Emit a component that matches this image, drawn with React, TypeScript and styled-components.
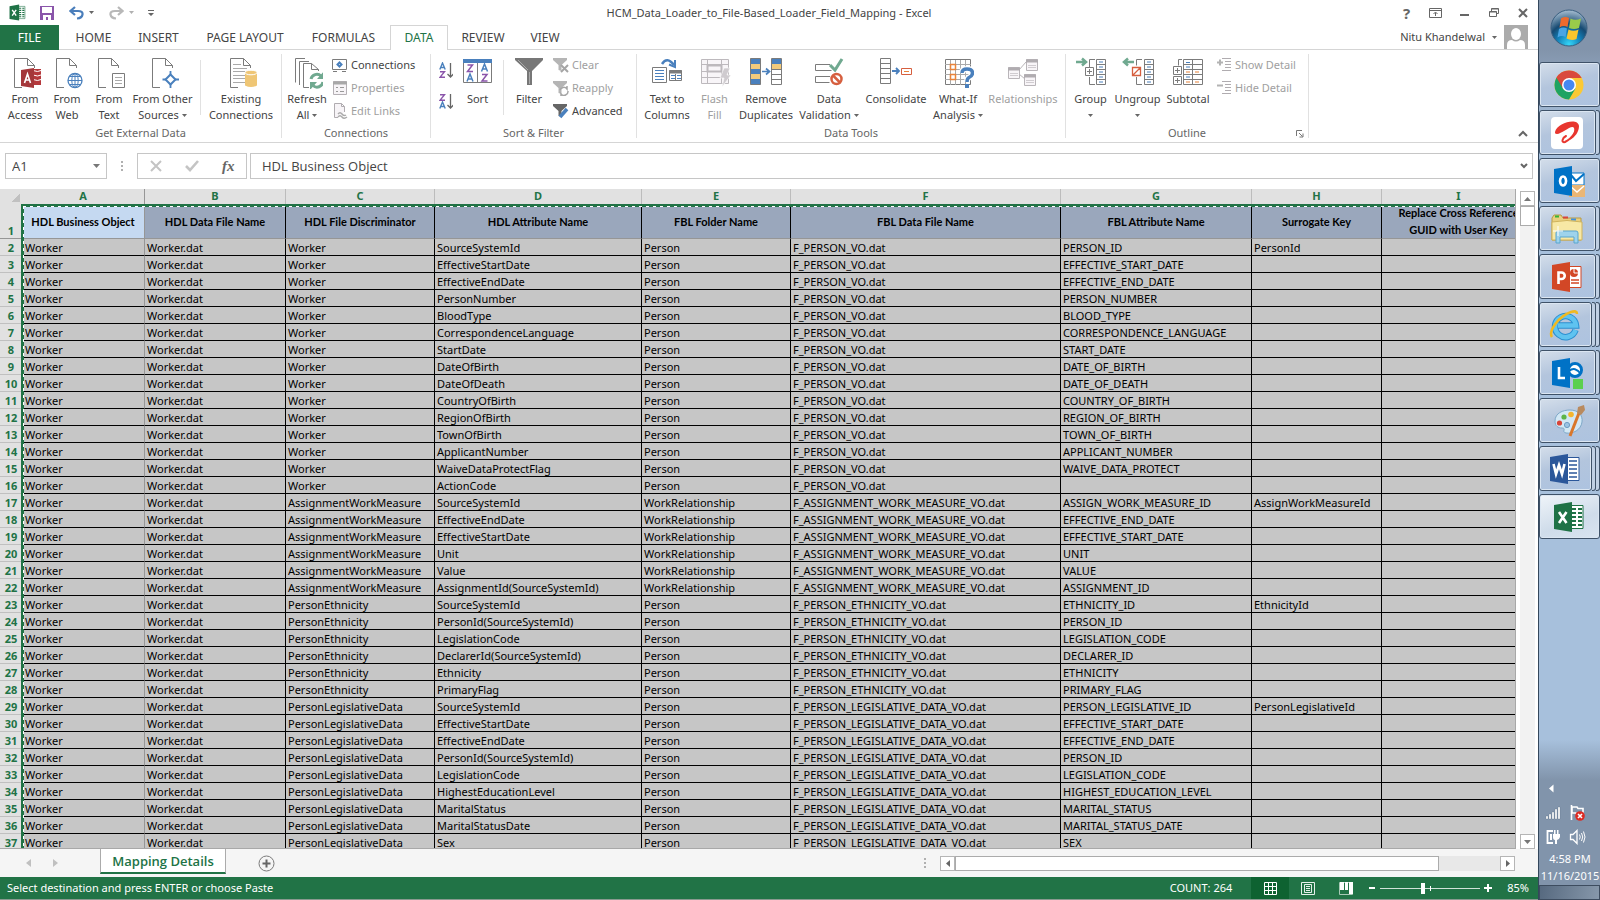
import React from "react";
import styled, { createGlobalStyle, css } from "styled-components";

const GREEN = "#217346";
const GREY = "#7b7b7b";
const BLUE = "#4a80bd";
const PURPLE = "#8a55aa";
const TEAL = "#70a990";
const ORANGE = "#e8833a";
const RED = "#d65f3f";
const UI_FONT = `"Noto Sans", "Open Sans", sans-serif`;

const GlobalStyle = createGlobalStyle`
  *, *::before, *::after { box-sizing: border-box; }
  body { margin: 0; font: 11px/16px ${UI_FONT}; color: #444; background: #fff; overflow: hidden; }
  button, input { font: inherit; color: inherit; border: 0; background: none; padding: 0; margin: 0; border-radius: 0; outline: none; }
  svg { display: block; flex: none; }
`;

/* ---------- shell ---------- */

const Desktop = styled.div`
  display: flex;
  height: 100vh;
`;

const ExcelWindow = styled.main`
  flex: 1;
  min-width: 0;
  display: flex;
  flex-direction: column;
  background: #fff;
`;

/* ---------- title bar ---------- */

const TitleBar = styled.header`
  display: grid;
  grid-template-columns: 1fr auto 1fr;
  align-items: center;
  height: 25px;
`;

const QuickAccess = styled.div`
  display: flex;
  align-items: center;
  height: 22px;
  padding-left: 9px;
`;

const QuickButton = styled.button<{ $w: number }>`
  display: flex;
  align-items: center;
  width: ${(p) => p.$w}px;
  height: 20px;
`;

const Title = styled.h1`
  margin: 0;
  font-size: 11px;
  font-weight: 400;
  line-height: 25px;
`;

const WindowButtons = styled.div`
  display: flex;
  justify-content: flex-end;
  align-items: center;
  height: 22px;
  padding-right: 1px;
`;

const WindowButton = styled.button`
  display: flex;
  align-items: center;
  justify-content: center;
  width: 29px;
  height: 20px;
  font-size: 15px;
  font-weight: 700;
  color: #666;
`;

/* ---------- ribbon tabs ---------- */

const TabBar = styled.nav`
  display: flex;
  height: 25px;
  border-bottom: 1px solid #d5d5d5;
`;

const RibbonTab = styled.button<{ $w: number; $kind?: "file" | "active" }>`
  width: ${(p) => p.$w}px;
  height: 25px;
  font-size: 12px;
  white-space: nowrap;
  ${(p) =>
    p.$kind === "file" &&
    css`
      background: ${GREEN};
      color: #fff;
    `}
  ${(p) =>
    p.$kind === "active" &&
    css`
      margin-left: 4px;
      color: ${GREEN};
      background: #fff;
      border: 1px solid #d5d5d5;
      border-bottom: 0;
    `}
`;

const Account = styled.button`
  display: flex;
  align-items: center;
  gap: 7px;
  height: 24px;
  margin-left: auto;
  padding-right: 10px;
  font-size: 11px;
`;

/* ---------- ribbon ---------- */

const Ribbon = styled.section`
  display: flex;
  position: relative;
  height: 93px;
  padding: 4px 0;
  border-bottom: 1px solid #d5d5d5;
`;

const Group = styled.div<{ $w: number }>`
  position: relative;
  display: flex;
  flex-direction: column;
  width: ${(p) => p.$w}px;
  height: 84px;
  padding-left: 4px;
  border-right: 1px solid #e1e1e1;
`;

const GroupBody = styled.div`
  display: flex;
  height: 72px;
`;

const GroupName = styled.div`
  padding-right: 4px;
  color: #666;
  line-height: 20px;
  text-align: center;
`;

const BigButton = styled.button<{ $w: number; $off?: boolean }>`
  display: flex;
  flex-direction: column;
  align-items: center;
  width: ${(p) => p.$w}px;
  padding-top: 3px;
  white-space: nowrap;
  color: ${(p) => (p.$off ? "#a0a0a0" : "#444")};
`;

const ButtonLabel = styled.span`
  display: flex;
  align-items: center;
  justify-content: center;
  gap: 3px;
  height: 16px;
`;

const LabelStack = styled.span`
  margin-top: 2px;
`;

const Divider = styled.div`
  width: 1px;
  height: 55px;
  margin: 6px 5px 0;
  background: #e1e1e1;
`;

const SmallColumn = styled.div`
  display: flex;
  flex-direction: column;
  margin-left: 4px;
`;

const SmallButton = styled.button<{ $off?: boolean }>`
  display: flex;
  align-items: center;
  gap: 3px;
  height: 23px;
  padding-bottom: 2px;
  white-space: nowrap;
  color: ${(p) => (p.$off ? "#a0a0a0" : "#444")};
`;

const SortColumn = styled.div`
  display: flex;
  flex-direction: column;
  gap: 11px;
  width: 22px;
  padding-top: 8px;
`;

const SortButton = styled.button`
  display: flex;
  justify-content: center;
  height: 20px;
`;

const Launcher = styled.button`
  position: absolute;
  right: 3px;
  bottom: 0;
  width: 9px;
  height: 9px;
`;

const Collapse = styled.button`
  margin: auto 10px 0 auto;
`;

/* ---------- formula bar ---------- */

const FormulaBar = styled.section`
  display: flex;
  align-items: center;
  height: 46px;
  padding: 0 5px;
  font-family: "Open Sans", sans-serif;
  font-size: 13px;
`;

const NameBox = styled.div`
  display: flex;
  align-items: center;
  width: 102px;
  height: 26px;
  padding: 0 6px;
  border: 1px solid #c6c6c6;
`;

const NameInput = styled.input`
  flex: 1;
  min-width: 0;
`;

const Dots = styled.div`
  width: 30px;
  display: flex;
  justify-content: center;
`;

const FormulaTools = styled.div`
  display: flex;
  align-items: center;
  justify-content: space-around;
  width: 110px;
  height: 26px;
  margin-right: 3px;
  border: 1px solid #c6c6c6;
`;

const FxButton = styled.button`
  font: italic 700 15px/20px "Liberation Serif", serif;
  color: #666;
`;

const FormulaBox = styled.div`
  display: flex;
  align-items: center;
  flex: 1;
  height: 26px;
  padding: 0 4px 0 11px;
  border: 1px solid #c6c6c6;
`;

/* ---------- sheet ---------- */

const SheetArea = styled.section`
  display: flex;
  flex: 1;
  min-height: 0;
`;

const GridPane = styled.div`
  position: relative;
  flex: 1;
  min-width: 0;
  overflow: hidden;
  border-right: 1px solid #a8a8a8;
  border-bottom: 1px solid #a8a8a8;
  background: #c6c6c6;
`;

const CopyOutline = styled.div`
  position: absolute;
  top: 15px;
  left: 21px;
  right: 0;
  bottom: 0;
  border-top: 2px solid ${GREEN};
  border-left: 2px solid ${GREEN};
  pointer-events: none;
  &::before {
    content: "";
    position: absolute;
    inset: -1px 0 auto 0;
    height: 2px;
    background: repeating-linear-gradient(90deg, #fff 0 3px, ${GREEN} 3px 7px) top / 100% 1px no-repeat,
      linear-gradient(${GREEN}, ${GREEN});
    background-position: 0 1px, 0 0;
  }
  &::after {
    content: "";
    position: absolute;
    inset: 0 auto 0 0;
    width: 1px;
    background: repeating-linear-gradient(180deg, #fff 0 3px, ${GREEN} 3px 7px);
  }
`;

const Sheet = styled.table`
  table-layout: fixed;
  width: 1536px;
  border-collapse: separate;
  border-spacing: 0;
  color: #000;
`;

const CornerCell = styled.td`
  height: 15px;
  padding: 0;
  background: linear-gradient(135deg, transparent 50%, #c0c0c0 50%) 12px 5px / 8px 8px no-repeat #e1e1e1;
`;

const ColHead = styled.th<{ $freeze?: boolean }>`
  height: 15px;
  padding: 0 0 1px;
  line-height: 14px;
  color: ${GREEN};
  background: #e1e1e1;
  border-right: 1px solid ${(p) => (p.$freeze ? "#969696" : "#bcbcbc")};
`;

const RowHead = styled.th<{ $first?: boolean }>`
  height: ${(p) => (p.$first ? 35 : 17)}px;
  padding: 0;
  line-height: 14px;
  vertical-align: bottom;
  color: ${GREEN};
  background: #e1e1e1;
  border-bottom: 1px solid ${(p) => (p.$first ? "#969696" : "#c0c0c0")};
`;

const FieldHead = styled.td<{ $freeze?: boolean }>`
  height: 35px;
  padding: 0;
  text-align: center;
  white-space: pre;
  font-family: Lato, sans-serif;
  font-weight: 700;
  line-height: 17px;
  background: ${(p) => (p.$freeze ? "#c5d9f1" : "#9aa7bc")};
  border-right: 1px solid ${(p) => (p.$freeze ? "#969696" : "#000")};
  border-bottom: 1px solid #969696;
`;

const Cell = styled.td<{ $freeze?: boolean }>`
  height: 17px;
  padding: 2px 0 0 ${(p) => (p.$freeze ? 3 : 2)}px;
  line-height: 14px;
  white-space: nowrap;
  background: #c6c6c6;
  border-right: 1px solid ${(p) => (p.$freeze ? "#969696" : "#000")};
  border-bottom: 1px solid #000;
`;

const VScroll = styled.div`
  display: flex;
  flex-direction: column;
  width: 15px;
  margin: 2px 3px 0 4px;
  background: #f2f2f2;
`;

const ScrollButton = styled.button`
  display: flex;
  align-items: center;
  justify-content: center;
  flex: none;
  width: 15px;
  height: 15px;
  background: #fff;
  border: 1px solid #b5b5b5;
`;

const VThumb = styled.div`
  height: 20px;
  margin-bottom: auto;
  background: #fff;
  border: 1px solid #ababab;
`;

/* ---------- sheet tabs ---------- */

const SheetTabs = styled.nav`
  display: flex;
  align-items: center;
  height: 28px;
  padding-right: 23px;
  background: #f5f5f5;
`;

const TabArrows = styled.div`
  display: flex;
  gap: 22px;
  width: 100px;
  padding-left: 26px;
`;

const SheetTab = styled.button`
  align-self: flex-start;
  width: 126px;
  height: 25px;
  color: ${GREEN};
  font-family: "Open Sans", sans-serif;
  font-size: 13px;
  font-weight: 600;
  background: #fff;
  border: 1px solid #ababab;
  border-top: 0;
  border-bottom: 2px solid ${GREEN};
`;

const AddSheet = styled.button`
  margin-left: 32px;
`;

const HScroll = styled.div`
  display: flex;
  align-items: center;
  width: 575px;
  margin-left: 14px;
  background: #e8e8e8;
`;

const SplitDots = styled.div`
  margin-left: auto;
`;

const HThumb = styled.div`
  width: 484px;
  height: 15px;
  margin-right: auto;
  background: #fff;
  border: 1px solid #ababab;
`;

/* ---------- status bar ---------- */

const StatusBar = styled.footer`
  display: flex;
  align-items: center;
  height: 23px;
  padding: 0 9px 0 7px;
  color: #fff;
  background: ${GREEN};
  border-bottom: 1px solid #8a9a90;
`;

const Count = styled.span`
  margin-left: auto;
  margin-right: 19px;
`;

const ViewButton = styled.button<{ $on?: boolean }>`
  display: flex;
  align-items: center;
  justify-content: center;
  width: 38px;
  height: 22px;
  background: ${(p) => (p.$on ? "#0e6231" : "transparent")};
`;

const ZoomButton = styled.button`
  display: flex;
  justify-content: center;
  width: 10px;
`;

const ZoomRange = styled.input`
  appearance: none;
  width: 100px;
  height: 14px;
  margin: 0 3px;
  background: linear-gradient(#fff, #fff) 50% 50% / 1px 5px no-repeat,
    linear-gradient(#cfe2d7, #cfe2d7) 0 50% / 100% 1px no-repeat;
  &::-webkit-slider-thumb {
    appearance: none;
    width: 4px;
    height: 11px;
    background: #fff;
  }
`;

const ZoomGroup = styled.div`
  display: flex;
  align-items: center;
  margin: 0 14px 0 2px;
`;

/* ---------- taskbar ---------- */

const Taskbar = styled.aside`
  display: flex;
  flex-direction: column;
  width: 62px;
  border-left: 1px solid #34475c;
  background: linear-gradient(#8294ab 0, #8294ab 50px, #a7c0dc 130px, #a7c0dc calc(100% - 160px), #8194ab calc(100% - 120px));
`;

const StartButton = styled.button`
  display: flex;
  justify-content: center;
  height: 62px;
  padding: 9px 2px 0 0;
`;

const TaskList = styled.div`
  display: flex;
  flex-direction: column;
  gap: 3px;
`;

const TaskRow = styled.div`
  display: flex;
  height: 45px;
`;

const TaskButton = styled.button<{ $active?: boolean }>`
  display: flex;
  align-items: center;
  justify-content: center;
  flex: 1;
  padding-right: 2px;
  border: 1px solid #3f5268;
  border-radius: 3px;
  box-shadow: inset 0 0 0 1px #dbe6f2;
  background: ${(p) =>
    p.$active
      ? "linear-gradient(160deg, #eff4f9, #cfdcea 60%, #d9e4f0)"
      : "linear-gradient(165deg, #d4deea, #b3c5dd 45%, #adc3e0)"};
`;

const TaskEdge = styled.div`
  width: 4px;
  border: 1px solid #3f5268;
  border-left: 0;
  border-radius: 0 3px 3px 0;
  background: #c0d0e3;
`;

const Tray = styled.div`
  margin-top: auto;
  display: flex;
  flex-direction: column;
  color: #fff;
`;

const TrayArrow = styled.button`
  width: 24px;
  padding-left: 9px;
`;

const TrayIcons = styled.div`
  display: grid;
  grid-template-columns: 24px 24px;
  row-gap: 6px;
  padding: 11px 0 4px 6px;
`;

const TrayButton = styled.button`
  height: 18px;
`;

const Clock = styled.time`
  padding-left: 1px;
  line-height: 17px;
  text-align: center;
  white-space: nowrap;
`;

const ShowDesktop = styled.button`
  height: 15px;
  margin-top: 1px;
  border: 1px solid #3d4c5f;
  background: linear-gradient(100deg, #56697f, #8798ab);
`;

/* ---------- icons ---------- */

const Ico = ({ w = 32, h = w, children }: { w?: number; h?: number; children: React.ReactNode }) => (
  <svg width={w} height={h} viewBox={`0 0 ${w} ${h}`} fill="none" stroke={GREY} aria-hidden="true">
    {children}
  </svg>
);

const Caret = ({ color = "#666" }: { color?: string }) => (
  <svg width="5" height="3" viewBox="0 0 5 3" aria-hidden="true">
    <path d="M0 0h5L2.5 3z" fill={color} />
  </svg>
);

const Doc = ({ x = 5 }: { x?: number }) => (
  <>
    <path d={`M${x + 20.5} 11V8.5L${x + 13.5} 1.5H${x + 0.5}V30.5H${x + 8}`} fill="#fff" />
    <path d={`M${x + 13.5} 1.5V8.5H${x + 20.5}`} />
  </>
);

const iconAccess = (
  <Ico>
    <Doc />
    <path d="M25 12h7v16h-7z" fill="#b5383c" stroke="none" />
    <path d="M24 13.5q5 2 8 0M24 18q5 2 8 0M24 22.500q5 2 8 0" stroke="#fff" />
    <path d="M12 13l13-2v20l-13-2z" fill="#a4373a" stroke="none" />
    <path d="M15.500 26L18.500 17L21.500 26M16.500 23h4" stroke="#fff" strokeWidth="1.6" />
  </Ico>
);
const iconWeb = (
  <Ico>
    <Doc />
    <circle cx="24" cy="23.500" r="7" fill="#fff" stroke={BLUE} strokeWidth="1.300" />
    <ellipse cx="24" cy="23.500" rx="3.200" ry="7" stroke={BLUE} />
    <path d="M17 23.500h14M24 16.500v14M18.500 19.500h11M18.500 27.500h11" stroke={BLUE} />
  </Ico>
);
const iconText = (
  <Ico>
    <Doc />
    <path d="M19.500 16.500h12v14h-12z" fill="#fff" />
    <path d="M22 20.500h7M22 23.500h7M22 26.500h7" stroke="#aaa" />
  </Ico>
);
const iconOther = (
  <Ico>
    <Doc />
    <path d="M23.500 14v17M15.500 22.500h17" stroke={BLUE} strokeWidth="1.800" />
    <path d="M23.500 17.500l5 5l-5 5l-5-5z" fill="#fff" stroke={BLUE} strokeWidth="2" />
  </Ico>
);
const iconExisting = (
  <Ico>
    <Doc />
    <path d="M8 7.500h8M8 11.500h14M8 14.500h12M8 18.500h12M8 21.500h12M8 25.500h12" stroke="#aaa" />
    <path d="M20 15.500v13q6 3 12 0v-13z" fill="#efc675" stroke="none" />
    <ellipse cx="26" cy="15.500" rx="6" ry="2.300" fill="#efc675" stroke="#fff" />
  </Ico>
);
const iconRefresh = (
  <Ico>
    <path d="M14 1.500H4.500V25.500M18 4.500H8.500V28" />
    <path d="M27.500 14V12.500L20.500 6.500H12.500V30.500H18" fill="#fff" />
    <path d="M20.500 6.500V12.500H27.500" />
    <path d="M20 22a6 6 0 0 1 10-3M32 25a6 6 0 0 1-10 3.500" stroke={TEAL} strokeWidth="3" />
    <path d="M33 14v8h-7zM19 33v-8h7z" fill={TEAL} stroke="none" />
  </Ico>
);
const iconConnections = (
  <Ico w={16}>
    <path d="M.5 12.500v-10h14v10z" fill="#fff" />
    <path d="M1 14.500h4M10 14.500h4" />
    <path d="M7.500 5.500l2 2l-2 2l-2-2z" stroke={BLUE} strokeWidth="2" />
  </Ico>
);
const iconProperties = (
  <Ico w={16}>
    <path d="M1.500 1.500h13v13h-13z" stroke="#b5b0b5" fill="#f7f4f7" />
    <path d="M1 3h14" stroke="#a8a8a8" strokeWidth="3" />
    <path d="M4 7.500h2M8 7.500h4M4 11.500h2M8 11.500h4" stroke="#999" />
  </Ico>
);
const iconLinks = (
  <Ico w={16}>
    <path d="M6 14.500H2.500V.5h7l3 3V9M9.500 .5v3h3" stroke="#b0acb0" fill="#f7f4f7" />
    <path d="M6 11q2-2.500 4 0t4 1M6 14q2-2.500 4 0t5 0" stroke="#aaa" strokeWidth="1.400" />
  </Ico>
);
const SortGlyph = ({ up }: { up?: boolean }) => (
  <Ico w={14} h={18}>
    <g transform={up ? "translate(0 8)" : undefined} stroke={BLUE} strokeWidth="1.400">
      <path d="M.8 7.500L3.500 1L6.200 7.500M1.800 5.500h3.600" />
    </g>
    <g transform={up ? "translate(0 -8)" : undefined} stroke={PURPLE} strokeWidth="1.400">
      <path d="M1 9.700h4.500L1 15.300h5" />
    </g>
    <path d="M11.500 1v14M8.500 12l3 3l3-3" stroke="#666" strokeWidth="1.300" />
  </Ico>
);
const iconSort = (
  <Ico>
    <path d="M1.500 3v22.500h28V3" fill="#fff" />
    <path d="M1 4h29" stroke={BLUE} strokeWidth="4" />
    <path d="M15.500 6v19" />
    <g strokeWidth="1.500">
      <path d="M5.500 8h5l-5 6.500h5.500M20 17.500h5l-5 6.500h5.500" stroke={PURPLE} />
      <path d="M5 24.500l3-7.500l3 7.500M6 22h4M19.500 14.500l3-7.500l3 7.500M20.500 12h4" stroke={BLUE} />
    </g>
  </Ico>
);
const iconFilter = (
  <Ico>
    <path d="M2 1h28v2L19 14v14h-5V14L2 3z" fill="#777" stroke="none" />
    <path d="M5 3l10 10M16.500 15v12" stroke="#aaa" />
  </Ico>
);
const SmallFunnel = ({ color, extra }: { color: string; extra: React.ReactNode }) => (
  <Ico w={16}>
    <path d="M0 1h14v2L8.500 8v6l-3-1V8L0 3z" fill={color} stroke="none" />
    {extra}
  </Ico>
);
const iconTextToCols = (
  <Ico>
    <path d="M1.500 10.500h14v15h-14z" fill="#fff" />
    <path d="M4 13.500h9M4 16.500h9M4 19.500h9M4 22.500h9" stroke={BLUE} />
    <path d="M18.500 13.500h12v10h-12z" fill="#fff" />
    <path d="M18 15h13" strokeWidth="3" />
    <path d="M20 18.500h4M26 18.500h4M20 21.500h4M26 21.500h4" stroke={BLUE} />
    <path d="M24.500 17v7" />
    <path d="M11 7q5-8 12 1" stroke={BLUE} strokeWidth="2.500" />
    <path d="M18 7.500l6 2.500V3" stroke={BLUE} strokeWidth="2" />
  </Ico>
);
const iconFlash = (
  <Ico>
    <g stroke="#bdb9bd">
      <path d="M2.500 2.500h27v24h-27z" fill="#f8f5f8" />
      <path d="M2 7.500h28M2 14.500h28M2 20.500h28M8.500 3v24M22.500 3v24" />
      <path d="M8.500 8.500h14v6h-14z" strokeWidth="2" />
    </g>
    <path d="M25 11h6l-3 7h4l-9 12l2-9h-4z" fill="#cfcbcf" stroke="#fff" strokeWidth=".6" />
  </Ico>
);
const iconDupes = (
  <Ico>
    <path d="M.5 1.500h10v26H.5z" fill={BLUE} />
    <path d="M1 7h9v5H1zM1 17h9v5H1z" fill="#f3cb7c" stroke="none" />
    <path d="M12 14.500h7M16 11.500l3.500 3l-3.500 3" stroke={BLUE} strokeWidth="1.700" />
    <path d="M21.500 1.500h10v26h-10z" fill="#fff" />
    <path d="M22 2h9v5h-9z" fill={BLUE} stroke="none" />
    <path d="M22 7h9v5h-9z" fill="#f3cb7c" stroke="none" />
    <path d="M22 12.500h9M22 17.500h9M22 22.500h9" />
  </Ico>
);
const iconValidation = (
  <Ico>
    <path d="M17 7.500H2.500v6h16M17 19.500H2.500v6h14" />
    <path d="M17 8l5 5L29 2" stroke={TEAL} strokeWidth="3" />
    <circle cx="23.500" cy="22" r="5" stroke={RED} strokeWidth="2.500" fill="#fff" />
    <path d="M20 18.500l7 7" stroke={RED} strokeWidth="2.500" />
  </Ico>
);
const iconConsolidate = (
  <Ico>
    <path d="M.5 1.500h10v25H.5z" fill="#fff" />
    <path d="M1 6.500h10M1 11.500h10M1 16.500h10M1 21.500h10" />
    <path d="M12 14h7M16 11l3 3l-3 3" stroke={BLUE} strokeWidth="1.800" />
    <path d="M21.500 11.500h10v6h-10z" stroke={RED} />
    <path d="M24 14.500h5" stroke={ORANGE} />
  </Ico>
);
const iconWhatIf = (
  <Ico>
    <path d="M3.500 2.500h25v25h-25z" fill="#fff" />
    <path d="M3 7.500h26M3 12.500h26M3 17.500h26M3 22.500h26M8.500 3v25M13.500 3v25M18.500 3v25M23.500 3v25" stroke="#aaa" />
    <path d="M8.500 7.500h5v5h-5zM8.500 17.500h5v5h-5z" fill="#fff" stroke={ORANGE} strokeWidth="1.500" />
    <path d="M20 16q0-4 5-4q5.500 0 5.500 4q0 3-3.500 4.500q-2 1-2 4.500" stroke="#fff" strokeWidth="6" />
    <path d="M20 16q0-4 5-4q5.500 0 5.500 4q0 3-3.500 4.500q-2 1-2 4.500" stroke={BLUE} strokeWidth="3.500" />
    <path d="M23 27h4v4h-4z" fill={BLUE} stroke="none" />
  </Ico>
);
const iconRelations = (
  <Ico>
    <g stroke="#b9b5b9" fill="#f8f5f8">
      <path d="M12 13l7-8M12 17l6 5" />
      <path d="M19.500 2.500h11v11h-11zM1.500 10.500h11v11h-11zM17.500 17.500h11v11h-11z" />
    </g>
    <path d="M19 4h12M1 12h12M17 19h12" stroke="#b0acb0" strokeWidth="3" />
    <path d="M21 8.500h8M21 10.500h8M3 16.500h8M3 18.500h8M19 23.500h8M19 25.500h8" stroke="#d0ccd0" />
  </Ico>
);
const iconGroup = (
  <Ico>
    <path d="M1 5h9M7 1.500l4 3.500l-4 3.500" stroke={TEAL} strokeWidth="2.500" />
    <path d="M20 2.500h-5.500v8M14.500 20v7.500H20" />
    <path d="M10.500 10.500h8v8h-8zM12 14.500h5M14.500 12v5" />
    <path d="M21.500 2.500h9v25h-9zM22 7.500h9M22 12.500h9M22 17.500h9M22 22.500h9" />
    <path d="M24 5h4M24 10h4M24 15h4M24 20h4M24 25h4" stroke={BLUE} />
  </Ico>
);
const iconUngroup = (
  <Ico>
    <path d="M12 5H3M6 1.500l-4 3.500l4 3.500" stroke={TEAL} strokeWidth="2.500" />
    <path d="M20 2.500h-5.500v6M14.500 20v7.500H20" />
    <path d="M10.500 10.500h8v8h-8zM11 18l7-7" stroke={RED} strokeWidth="1.300" />
    <path d="M22.500 2.500h9v25h-9zM23 7.500h9M23 12.500h9M23 17.500h9M23 22.500h9" />
    <path d="M25 5h4M25 10h4M25 15h4M25 20h4M25 25h4" stroke={BLUE} />
  </Ico>
);
const iconSubtotal = (
  <Ico>
    <path d="M10 2.500H6.500v6M1.500 9.500h8v8h-8zM1.500 19.500h8v8h-8zM3 13.500h5M5.500 11v5M3 23.500h5M5.500 21v5" />
    <path d="M11.500 2.500h19v25h-19zM12 7.500h19M12 12.500h19M12 17.500h19M12 22.500h19M20.500 3v25" />
    <path d="M14 5.500h4M14 10h4M14 20h4" stroke={BLUE} />
    <path d="M14 15h4M14 25h4M23 15h4M23 25h4" stroke={ORANGE} />
  </Ico>
);
const Detail = ({ plus }: { plus?: boolean }) => (
  <Ico w={16}>
    <path d={plus ? "M1 5.500h6M4 2.500v6" : "M1 5.500h6"} stroke="#b3b3b3" strokeWidth="2" />
    <path d="M6 1.500h9M9 4.500h6M9 7.500h6M9 10.500h6M6 13.500h9" stroke="#b0acb0" />
  </Ico>
);

/* two-tone Office application badge: a coloured cover over a page */
const Office = ({ color, glyph, page, size = 32 }: { color: string; glyph: string; page: React.ReactNode; size?: number }) => (
  <svg width={size} height={size} viewBox="0 0 32 32" fill="none" aria-hidden="true">
    {page}
    <path d="M1 4L19 1v30L1 28z" fill={color} />
    <path d={glyph} stroke="#fff" strokeWidth="2.600" />
  </svg>
);
const lines = (color: string) => (
  <>
    <path d="M18 4.500h12v23H18z" fill="#fff" stroke={color} />
    <path d="M20 8h8M20 12h8M20 16h8M20 20h8M20 24h8" stroke={color} strokeWidth="1.500" />
  </>
);
const ExcelLogo = ({ size }: { size?: number }) => (
  <Office
    size={size}
    color="#1f7246"
    glyph="M6 11l7.500 11M13.500 11L6 22"
    page={
      <>
        <path d="M18 4.500h12v23H18z" fill="#fff" stroke="#1f7246" />
        <path d="M19 8h4M25 8h4M19 12h4M25 12h4M19 16h4M25 16h4M19 20h4M25 20h4M19 24h4M25 24h4" stroke="#1f7246" strokeWidth="2" />
      </>
    }
  />
);

const chromeLogo = (
  <svg width="30" height="30" viewBox="0 0 30 30" aria-hidden="true">
    <circle cx="15" cy="15" r="14.500" fill="#fbc934" />
    <path d="M15 15L2.400 7.800A14.500 14.500 0 0 0 15 29.500L21.500 18.500z" fill="#1ea362" />
    <path d="M15 8H27.700A14.500 14.500 0 0 0 2.400 7.600L9 18.500z" fill="#d9493c" />
    <circle cx="15" cy="15" r="7" fill="#fff" />
    <circle cx="15" cy="15" r="5.500" fill="#4688f1" />
  </svg>
);
const airtelLogo = (
  <svg width="32" height="32" viewBox="0 0 32 32" fill="none" aria-hidden="true">
    <rect width="32" height="32" rx="4" fill="#fff" />
    <path d="M6 15C9 11 21 4 25 7C28 11 22 21 14 25C10 26 11 21 15 19" stroke="#e8362f" strokeWidth="2" strokeLinecap="round" />
    <path d="M4 15C6 6 27 0 28 9C28 15 24 20 19 23C22 18 24 14 23 11C21 7 11 17 6 17C4 17 4 16 4 15z" fill="#e8362f" />
  </svg>
);
const outlookPage = (
  <>
    <path d="M17 8h14v12H17z" fill="#fff" stroke="#0072c6" />
    <path d="M18 10l5 6l8-7" stroke="#0072c6" strokeWidth="2" />
    <path d="M16 20h16v12H16z" fill="#eab675" />
    <path d="M17 21l7 6l7-6" stroke="#fff" strokeWidth="1.500" />
  </>
);
const explorerLogo = (
  <svg width="32" height="32" viewBox="0 0 32 32" fill="none" aria-hidden="true">
    <path d="M1 5l2-3h7l2 3h18v22H1z" fill="#e9cf7e" stroke="#b89a45" />
    <path d="M4 3.500h4" stroke="#35b535" strokeWidth="2" />
    <path d="M12 4.500h5" stroke="#d9453a" strokeWidth="2" />
    <path d="M20 6.500h5" stroke="#3d8fe0" strokeWidth="2" />
    <path d="M1 9q15-3 30 0v18H1z" fill="#f7e8a5" stroke="#cfb35c" />
    <path d="M5 30V20q0-2 2-2h18q2 0 2 2v10h-4v-6H9v6z" fill="#9ed3ec" stroke="#58a5cf" />
    <path d="M7 13v10M2 18h10" stroke="#fff" />
  </svg>
);
const pptPage = (
  <>
    <path d="M18 5.500h12v21H18z" fill="#fff" stroke="#d24726" />
    <circle cx="23" cy="12" r="4" fill="#d24726" />
    <path d="M23 12V8M23 12h4" stroke="#fff" />
    <path d="M20 19h8M20 22h8" stroke="#d24726" strokeWidth="1.500" />
  </>
);
const ieLogo = (
  <svg width="32" height="32" viewBox="0 0 32 32" fill="none" aria-hidden="true">
    <path d="M26.500 21a10.500 10.500 0 1 1 .5-4.500H9" stroke="#2a8fd0" strokeWidth="6.500" />
    <path d="M26.500 21a10.500 10.500 0 1 1 .5-4.500H9" stroke="#5fc3f0" strokeWidth="4.500" />
    <path d="M3 28C-1 22 10 7 22 3q6-2 6 2" stroke="#f0b921" strokeWidth="2.600" />
  </svg>
);
const lyncPage = (
  <>
    <circle cx="24" cy="13" r="6.500" stroke="#0072c6" strokeWidth="3" fill="#fff" />
    <path d="M18 14q6-5 12 3" stroke="#0072c6" strokeWidth="2" />
    <path d="M22 22h10v10H22z" fill="#5bd04f" />
  </>
);
const paintLogo = (
  <svg width="32" height="32" viewBox="0 0 32 32" fill="none" aria-hidden="true">
    <path d="M2 16C2 8 10 5 17 5C25 5 30 10 29 17C28 25 20 29 13 28C8 27 14 23 9 23C5 23 2 21 2 16z" fill="#d3e8f5" stroke="#7fa9c9" />
    <circle cx="6.500" cy="18" r="2.600" fill="#d9453a" />
    <circle cx="11" cy="12" r="2.600" fill="#5db548" />
    <circle cx="18" cy="9.500" r="2.800" fill="#f5b52e" />
    <circle cx="14" cy="20" r="2.600" fill="#9cc4e4" stroke="#6f9cc4" />
    <path d="M17 31L26 8" stroke="#d9772b" strokeWidth="3" />
    <path d="M24 8l1-6l6-2l1 5l-4 5z" fill="#b98a5e" />
  </svg>
);

const startLogo = (
  <svg width="38" height="38" viewBox="0 0 38 38" aria-hidden="true">
    <defs>
      <radialGradient id="orb" cx="50%" cy="95%" r="95%">
        <stop offset="0" stopColor="#35d7f8" />
        <stop offset=".35" stopColor="#1380b8" />
        <stop offset=".6" stopColor="#164a72" />
        <stop offset="1" stopColor="#a9bfd2" />
      </radialGradient>
    </defs>
    <circle cx="19" cy="19" r="18" fill="url(#orb)" stroke="#3a5f80" />
    <path d="M11 9.500q4-2.500 8-.5l-1.500 9q-4-2-8 .5z" fill="#ee6a2d" />
    <path d="M20.500 9.500q5 2.500 10.500 0l-2 9.500q-5 2-10 0z" fill="#9acb4a" />
    <path d="M9 20q4-2.500 8-.5l-1.500 8.500q-4-2-8 .5z" fill="#4aa5e4" />
    <path d="M18.500 20.500q5 2.500 10 0l-2 9.500q-5 2-10-.5z" fill="#fbc52c" />
  </svg>
);

/* ---------- data ---------- */

const COLUMNS = [
  { letter: "A", width: 123, name: "HDL Business Object" },
  { letter: "B", width: 141, name: "HDL Data File Name" },
  { letter: "C", width: 149, name: "HDL File Discriminator" },
  { letter: "D", width: 207, name: "HDL Attribute Name" },
  { letter: "E", width: 149, name: "FBL Folder Name" },
  { letter: "F", width: 270, name: "FBL Data File Name" },
  { letter: "G", width: 191, name: "FBL Attribute Name" },
  { letter: "H", width: 130, name: "Surrogate Key" },
  { letter: "I", width: 154, name: "Replace Cross Reference\nGUID with User Key" },
];

type Entry = [attribute: string, fblAttribute: string, surrogate?: string];

const BLOCKS: { type: string; folder: string; file: string; rows: Entry[] }[] = [
  {
    type: "Worker",
    folder: "Person",
    file: "F_PERSON_VO.dat",
    rows: [
      ["SourceSystemId", "PERSON_ID", "PersonId"],
      ["EffectiveStartDate", "EFFECTIVE_START_DATE"],
      ["EffectiveEndDate", "EFFECTIVE_END_DATE"],
      ["PersonNumber", "PERSON_NUMBER"],
      ["BloodType", "BLOOD_TYPE"],
      ["CorrespondenceLanguage", "CORRESPONDENCE_LANGUAGE"],
      ["StartDate", "START_DATE"],
      ["DateOfBirth", "DATE_OF_BIRTH"],
      ["DateOfDeath", "DATE_OF_DEATH"],
      ["CountryOfBirth", "COUNTRY_OF_BIRTH"],
      ["RegionOfBirth", "REGION_OF_BIRTH"],
      ["TownOfBirth", "TOWN_OF_BIRTH"],
      ["ApplicantNumber", "APPLICANT_NUMBER"],
      ["WaiveDataProtectFlag", "WAIVE_DATA_PROTECT"],
      ["ActionCode", ""],
    ],
  },
  {
    type: "AssignmentWorkMeasure",
    folder: "WorkRelationship",
    file: "F_ASSIGNMENT_WORK_MEASURE_VO.dat",
    rows: [
      ["SourceSystemId", "ASSIGN_WORK_MEASURE_ID", "AssignWorkMeasureId"],
      ["EffectiveEndDate", "EFFECTIVE_END_DATE"],
      ["EffectiveStartDate", "EFFECTIVE_START_DATE"],
      ["Unit", "UNIT"],
      ["Value", "VALUE"],
      ["AssignmentId(SourceSystemId)", "ASSIGNMENT_ID"],
    ],
  },
  {
    type: "PersonEthnicity",
    folder: "Person",
    file: "F_PERSON_ETHNICITY_VO.dat",
    rows: [
      ["SourceSystemId", "ETHNICITY_ID", "EthnicityId"],
      ["PersonId(SourceSystemId)", "PERSON_ID"],
      ["LegislationCode", "LEGISLATION_CODE"],
      ["DeclarerId(SourceSystemId)", "DECLARER_ID"],
      ["Ethnicity", "ETHNICITY"],
      ["PrimaryFlag", "PRIMARY_FLAG"],
    ],
  },
  {
    type: "PersonLegislativeData",
    folder: "Person",
    file: "F_PERSON_LEGISLATIVE_DATA_VO.dat",
    rows: [
      ["SourceSystemId", "PERSON_LEGISLATIVE_ID", "PersonLegislativeId"],
      ["EffectiveStartDate", "EFFECTIVE_START_DATE"],
      ["EffectiveEndDate", "EFFECTIVE_END_DATE"],
      ["PersonId(SourceSystemId)", "PERSON_ID"],
      ["LegislationCode", "LEGISLATION_CODE"],
      ["HighestEducationLevel", "HIGHEST_EDUCATION_LEVEL"],
      ["MaritalStatus", "MARITAL_STATUS"],
      ["MaritalStatusDate", "MARITAL_STATUS_DATE"],
      ["Sex", "SEX"],
    ],
  },
];

const ROWS = BLOCKS.flatMap((b) =>
  b.rows.map(([attr, fbl, key]) => ["Worker", "Worker.dat", b.type, attr, b.folder, b.file, fbl, key ?? "", ""])
);

/* ---------- composed parts ---------- */

const Big = ({ w, icon, label, off, menu }: { w: number; icon: React.ReactNode; label: string[]; off?: boolean; menu?: boolean }) => (
  <BigButton $w={w} $off={off}>
    {icon}
    <LabelStack>
      {label.map((line, i) => (
        <ButtonLabel key={i}>
          {line}
          {menu && i === label.length - 1 && <Caret />}
        </ButtonLabel>
      ))}
    </LabelStack>
  </BigButton>
);

const TASKS: { name: string; icon: React.ReactNode; edges: number; active?: boolean }[] = [
  { name: "Chrome", icon: chromeLogo, edges: 0 },
  { name: "Airtel", icon: airtelLogo, edges: 1 },
  { name: "Outlook", icon: <Office color="#0072c6" glyph="M10 11.500a3 4.500 0 1 0 .1 0z" page={outlookPage} />, edges: 0 },
  { name: "Explorer", icon: explorerLogo, edges: 1 },
  { name: "PowerPoint", icon: <Office color="#d24726" glyph="M7.500 23V11.500h3a3 3 0 0 1 0 6.500h-3" page={pptPage} />, edges: 1 },
  { name: "Internet Explorer", icon: ieLogo, edges: 2 },
  { name: "Lync", icon: <Office color="#0072c6" glyph="M8 10v11h6" page={lyncPage} />, edges: 1 },
  { name: "Paint", icon: paintLogo, edges: 0 },
  { name: "Word", icon: <Office color="#2b579a" glyph="M4.500 11l2.500 10l3-9l3 9l2.500-10" page={lines("#2b579a")} />, edges: 2 },
  { name: "Excel", icon: <ExcelLogo />, edges: 0, active: true },
];

export default function App() {
  return (
    <Desktop>
      <GlobalStyle />
      <ExcelWindow>
        <TitleBar>
          <QuickAccess>
            <QuickButton $w={31} aria-label="Excel">
              <ExcelLogo size={17} />
            </QuickButton>
            <QuickButton $w={29} aria-label="Save">
              <svg width="14" height="14" viewBox="0 0 14 14">
                <path d="M0 0h14v14H0z" fill="#8a55aa" />
                <path d="M2 1h10v6H2zM3 9h8v5H8v-3H6v3H3z" fill="#fff" />
              </svg>
            </QuickButton>
            <QuickButton $w={20} aria-label="Undo">
              <svg width="15" height="14" viewBox="0 0 15 14" fill="none">
                <path d="M2 5h7q5 0 4.500 3.500Q13 12 8 12.500M6 1L1.500 5L6 9" stroke="#4a7ebb" strokeWidth="2.200" />
              </svg>
            </QuickButton>
            <QuickButton $w={20} aria-label="Undo list">
              <Caret />
            </QuickButton>
            <QuickButton $w={20} aria-label="Redo">
              <svg width="15" height="14" viewBox="0 0 15 14" fill="none">
                <path d="M13 5H6Q1 5 1.500 8.500Q2 12 7 12.500M9 1l4.500 4L9 9" stroke="#b8b8b8" strokeWidth="2.200" />
              </svg>
            </QuickButton>
            <QuickButton $w={19} aria-label="Redo list">
              <Caret color="#b0b0b0" />
            </QuickButton>
            <QuickButton $w={10} aria-label="Customize">
              <svg width="6" height="6" viewBox="0 0 6 6">
                <path d="M0 0h6v1H0zM0 3h6L3 6z" fill="#666" />
              </svg>
            </QuickButton>
          </QuickAccess>
          <Title>HCM_Data_Loader_to_File-Based_Loader_Field_Mapping - Excel</Title>
          <WindowButtons>
            <WindowButton aria-label="Help">?</WindowButton>
            <WindowButton aria-label="Ribbon display options">
              <Ico w={13} h={10}>
                <path d="M.5 .5h12v9H.5zM1 2.500h11M6.500 8V4.500M4.500 6l2-2l2 2" stroke="#666" />
              </Ico>
            </WindowButton>
            <WindowButton aria-label="Minimize">
              <Ico w={10} h={10}>
                <path d="M0 7h9" stroke="#666" strokeWidth="2" />
              </Ico>
            </WindowButton>
            <WindowButton aria-label="Restore">
              <Ico w={10} h={10}>
                <path d="M2.500 3V.5h7v5H8M.5 3.500h7v5H.5zM.5 4h7M2.500 1h7" stroke="#666" />
              </Ico>
            </WindowButton>
            <WindowButton aria-label="Close">
              <Ico w={10} h={10}>
                <path d="M1 1l8 8M9 1l-8 8" stroke="#666" strokeWidth="2" />
              </Ico>
            </WindowButton>
          </WindowButtons>
        </TitleBar>

        <TabBar>
          <RibbonTab $w={59} $kind="file">FILE</RibbonTab>
          <RibbonTab $w={69}>HOME</RibbonTab>
          <RibbonTab $w={61}>INSERT</RibbonTab>
          <RibbonTab $w={112}>PAGE LAYOUT</RibbonTab>
          <RibbonTab $w={85}>FORMULAS</RibbonTab>
          <RibbonTab $w={58} $kind="active">DATA</RibbonTab>
          <RibbonTab $w={70}>REVIEW</RibbonTab>
          <RibbonTab $w={54}>VIEW</RibbonTab>
          <Account>
            Nitu Khandelwal
            <Caret />
            <svg width="24" height="24" viewBox="0 0 24 24">
              <path d="M0 0h24v24H0z" fill="#ababab" />
              <ellipse cx="12" cy="9" rx="5" ry="6" fill="#fff" />
              <path d="M3 24v-4q0-5 5-5q4 3 8 0q5 0 5 5v4z" fill="#fff" />
            </svg>
          </Account>
        </TabBar>

        <Ribbon>
          <Group $w={282}>
            <GroupBody>
              <Big w={42} icon={iconAccess} label={["From", "Access"]} />
              <Big w={42} icon={iconWeb} label={["From", "Web"]} />
              <Big w={42} icon={iconText} label={["From", "Text"]} />
              <Big w={65} icon={iconOther} label={["From Other", "Sources"]} menu />
              <Divider />
              <Big w={70} icon={iconExisting} label={["Existing", "Connections"]} />
            </GroupBody>
            <GroupName>Get External Data</GroupName>
          </Group>
          <Group $w={149}>
            <GroupBody>
              <Big w={42} icon={iconRefresh} label={["Refresh", "All"]} menu />
              <SmallColumn>
                <SmallButton>{iconConnections}Connections</SmallButton>
                <SmallButton $off>{iconProperties}Properties</SmallButton>
                <SmallButton $off>{iconLinks}Edit Links</SmallButton>
              </SmallColumn>
            </GroupBody>
            <GroupName>Connections</GroupName>
          </Group>
          <Group $w={206}>
            <GroupBody>
              <SortColumn>
                <SortButton aria-label="Sort A to Z"><SortGlyph /></SortButton>
                <SortButton aria-label="Sort Z to A"><SortGlyph up /></SortButton>
              </SortColumn>
              <Big w={41} icon={iconSort} label={["Sort"]} />
              <Divider />
              <Big w={40} icon={iconFilter} label={["Filter"]} />
              <SmallColumn>
                <SmallButton $off>
                  <SmallFunnel color="#b5b5b5" extra={<path d="M8 8l7 7M15 8l-7 7" stroke="#a5a5a5" strokeWidth="2" />} />
                  Clear
                </SmallButton>
                <SmallButton $off>
                  <SmallFunnel color="#b5b5b5" extra={<path d="M7 10a4 4 0 0 1 7-1v-3M15 11a4 4 0 0 1-7 3v2" stroke="#a5a5a5" strokeWidth="1.500" />} />
                  Reapply
                </SmallButton>
                <SmallButton>
                  <SmallFunnel color="#666" extra={<path d="M7 14l7-8" stroke={BLUE} strokeWidth="3.500" />} />
                  Advanced
                </SmallButton>
              </SmallColumn>
            </GroupBody>
            <GroupName>Sort &amp; Filter</GroupName>
          </Group>
          <Group $w={429}>
            <GroupBody>
              <Big w={52} icon={iconTextToCols} label={["Text to", "Columns"]} />
              <Big w={43} icon={iconFlash} label={["Flash", "Fill"]} off />
              <Big w={60} icon={iconDupes} label={["Remove", "Duplicates"]} />
              <Big w={66} icon={iconValidation} label={["Data", "Validation"]} menu />
              <Big w={68} icon={iconConsolidate} label={["Consolidate"]} />
              <Big w={56} icon={iconWhatIf} label={["What-If", "Analysis"]} menu />
              <Big w={74} icon={iconRelations} label={["Relationships"]} off />
            </GroupBody>
            <GroupName>Data Tools</GroupName>
          </Group>
          <Group $w={243}>
            <GroupBody>
              <Big w={41} icon={iconGroup} label={["Group", ""]} menu />
              <Big w={53} icon={iconUngroup} label={["Ungroup", ""]} menu />
              <Big w={48} icon={iconSubtotal} label={["Subtotal"]} />
              <SmallColumn>
                <SmallButton $off><Detail plus />Show Detail</SmallButton>
                <SmallButton $off><Detail />Hide Detail</SmallButton>
              </SmallColumn>
            </GroupBody>
            <GroupName>Outline</GroupName>
            <Launcher aria-label="Outline settings">
              <Ico w={8}>
                <path d="M.5 6V.5H6M3 3l3.500 3.500M7 3.500V7H3.500" stroke="#777" />
              </Ico>
            </Launcher>
          </Group>
          <Collapse aria-label="Collapse ribbon">
            <Ico w={10} h={8}>
              <path d="M1 6l4-4l4 4" stroke="#666" strokeWidth="2" />
            </Ico>
          </Collapse>
        </Ribbon>

        <FormulaBar>
          <NameBox>
            <NameInput aria-label="Name box" defaultValue="A1" />
            <button aria-label="Names">
              <svg width="7" height="4" viewBox="0 0 7 4"><path d="M0 0h7L3.500 4z" fill="#777" /></svg>
            </button>
          </NameBox>
          <Dots>
            <svg width="2" height="11" viewBox="0 0 2 11"><path d="M0 0h2v2H0zM0 4h2v2H0zM0 8h2v2H0z" fill="#b0b0b0" /></svg>
          </Dots>
          <FormulaTools>
            <button aria-label="Cancel">
              <Ico w={12}><path d="M1 1l10 10M11 1L1 11" stroke="#c4c4c4" strokeWidth="2" /></Ico>
            </button>
            <button aria-label="Enter">
              <Ico w={14} h={12}><path d="M1 6l4 4l8-9" stroke="#c4c4c4" strokeWidth="2.600" /></Ico>
            </button>
            <FxButton>fx</FxButton>
          </FormulaTools>
          <FormulaBox>
            <NameInput aria-label="Formula" defaultValue="HDL Business Object" />
            <button aria-label="Expand formula bar">
              <Ico w={8}><path d="M1 2l3 3l3-3" stroke="#666" strokeWidth="2" /></Ico>
            </button>
          </FormulaBox>
        </FormulaBar>

        <SheetArea>
          <GridPane>
            <Sheet>
              <colgroup>
                <col width={22} />
                {COLUMNS.map((c) => (
                  <col key={c.letter} width={c.width} />
                ))}
              </colgroup>
              <thead>
                <tr>
                  <CornerCell />
                  {COLUMNS.map((c, i) => (
                    <ColHead key={c.letter} scope="col" $freeze={i === 0}>{c.letter}</ColHead>
                  ))}
                </tr>
              </thead>
              <tbody>
                <tr>
                  <RowHead scope="row" $first>1</RowHead>
                  {COLUMNS.map((c, i) => (
                    <FieldHead key={c.letter} $freeze={i === 0}>{c.name}</FieldHead>
                  ))}
                </tr>
                {ROWS.map((row, r) => (
                  <tr key={r}>
                    <RowHead scope="row">{r + 2}</RowHead>
                    {row.map((text, i) => (
                      <Cell key={i} $freeze={i === 0}>{text}</Cell>
                    ))}
                  </tr>
                ))}
              </tbody>
            </Sheet>
            <CopyOutline />
          </GridPane>
          <VScroll>
            <ScrollButton aria-label="Scroll up">
              <svg width="7" height="4" viewBox="0 0 7 4"><path d="M0 4h7L3.500 0z" fill="#777" /></svg>
            </ScrollButton>
            <VThumb />
            <ScrollButton aria-label="Scroll down">
              <svg width="7" height="4" viewBox="0 0 7 4"><path d="M0 0h7L3.500 4z" fill="#777" /></svg>
            </ScrollButton>
          </VScroll>
        </SheetArea>

        <SheetTabs>
          <TabArrows>
            <button aria-label="Previous sheet">
              <svg width="5" height="8" viewBox="0 0 5 8"><path d="M5 0v8L0 4z" fill="#c0c0c0" /></svg>
            </button>
            <button aria-label="Next sheet">
              <svg width="5" height="8" viewBox="0 0 5 8"><path d="M0 0v8l5-4z" fill="#c0c0c0" /></svg>
            </button>
          </TabArrows>
          <SheetTab>Mapping Details</SheetTab>
          <AddSheet aria-label="New sheet">
            <Ico w={17}>
              <circle cx="8.500" cy="8.500" r="7.500" />
              <path d="M8.500 4.500v8M4.500 8.500h8" strokeWidth="2" stroke="#666" />
            </Ico>
          </AddSheet>
          <SplitDots>
            <svg width="2" height="11" viewBox="0 0 2 11"><path d="M0 0h2v2H0zM0 4h2v2H0zM0 8h2v2H0z" fill="#b0b0b0" /></svg>
          </SplitDots>
          <HScroll>
            <ScrollButton aria-label="Scroll left">
              <svg width="4" height="7" viewBox="0 0 4 7"><path d="M4 0v7L0 3.500z" fill="#666" /></svg>
            </ScrollButton>
            <HThumb />
            <ScrollButton aria-label="Scroll right">
              <svg width="4" height="7" viewBox="0 0 4 7"><path d="M0 0v7l4-3.500z" fill="#666" /></svg>
            </ScrollButton>
          </HScroll>
        </SheetTabs>

        <StatusBar>
          <span>Select destination and press ENTER or choose Paste</span>
          <Count>COUNT: 264</Count>
          <ViewButton $on aria-label="Normal">
            <Ico w={13}><path d="M.5 .5h12v12H.5zM.5 4.500h12M.5 8.500h12M4.500 .5v12M8.500 .5v12" stroke="#fff" /></Ico>
          </ViewButton>
          <ViewButton aria-label="Page layout">
            <Ico w={14} h={13}><path d="M.5 .5h13v12H.5zM3.500 2.500h7v8h-7zM5 4.500h4M5 6.500h4M5 8.500h4" stroke="#e6f0ea" /></Ico>
          </ViewButton>
          <ViewButton aria-label="Page break preview">
            <Ico w={14} h={13}>
              <path d="M.5 .5h13v12H.5z" stroke="#a9c9b6" />
              <path d="M1 0h4v8H1zM6 0h3v8H6zM10 0h4v12h-4z" fill="#fff" stroke="none" />
            </Ico>
          </ViewButton>
          <ZoomGroup>
            <ZoomButton aria-label="Zoom out"><Ico w={8}><path d="M1 4h6" stroke="#fff" strokeWidth="2" /></Ico></ZoomButton>
            <ZoomRange type="range" aria-label="Zoom" min={0} max={100} defaultValue={42} />
            <ZoomButton aria-label="Zoom in"><Ico w={8}><path d="M0 4h8M4 0v8" stroke="#fff" strokeWidth="2" /></Ico></ZoomButton>
          </ZoomGroup>
          <span>85%</span>
        </StatusBar>
      </ExcelWindow>

      <Taskbar>
        <StartButton aria-label="Start">{startLogo}</StartButton>
        <TaskList>
          {TASKS.map((t) => (
            <TaskRow key={t.name}>
              <TaskButton aria-label={t.name} $active={t.active}>{t.icon}</TaskButton>
              {Array.from({ length: t.edges }, (_, i) => (
                <TaskEdge key={i} />
              ))}
            </TaskRow>
          ))}
        </TaskList>
        <Tray>
          <TrayArrow aria-label="Show hidden icons">
            <svg width="6" height="9" viewBox="0 0 6 9"><path d="M5.500 .5v8L1 4.500z" fill="#fff" /></svg>
          </TrayArrow>
          <TrayIcons>
            <TrayButton aria-label="Network">
              <svg width="16" height="14" viewBox="0 0 16 14"><path d="M1 10h2v3H1zM4 8h2v5H4zM7 6h2v7H7zM10 3h2v10h-2zM13 1h2v12h-2z" fill="#fff" stroke="#55687f" strokeWidth=".3" /></svg>
            </TrayButton>
            <TrayButton aria-label="Action center">
              <svg width="17" height="16" viewBox="0 0 17 16" fill="none">
                <path d="M2.500 0v15M3 2h5l1 1.500h5v6H8L7 8H3z" stroke="#fff" strokeWidth="1.600" />
                <circle cx="11" cy="11" r="4.800" fill="#dd2a22" />
                <path d="M9 9l4 4M13 9l-4 4" stroke="#fff" strokeWidth="1.600" />
              </svg>
            </TrayButton>
            <TrayButton aria-label="Power">
              <svg width="16" height="16" viewBox="0 0 16 16" fill="none">
                <path d="M8 2H2.500v12H8" stroke="#fff" strokeWidth="1.800" />
                <path d="M5 5h2v6H5zM8 5h7v3q-1 3-3 3v4h-2v-4q-2 0-2-3zM9 1h1.500v4H9zM12 1h1.500v4H12z" fill="#fff" />
              </svg>
            </TrayButton>
            <TrayButton aria-label="Volume">
              <svg width="17" height="16" viewBox="0 0 17 16" fill="none">
                <path d="M1.500 5.500h2.500l4-4v13l-4-4H1.500z" stroke="#fff" strokeWidth="1.300" />
                <path d="M10.500 5.500q1.500 2.500 0 5M12.500 4q2.500 4 0 8M14.500 2.500q3 5.500 0 11" stroke="#fff" />
              </svg>
            </TrayButton>
          </TrayIcons>
          <Clock>4:58 PM</Clock>
          <Clock>11/16/2015</Clock>
          <ShowDesktop aria-label="Show desktop" />
        </Tray>
      </Taskbar>
    </Desktop>
  );
}
